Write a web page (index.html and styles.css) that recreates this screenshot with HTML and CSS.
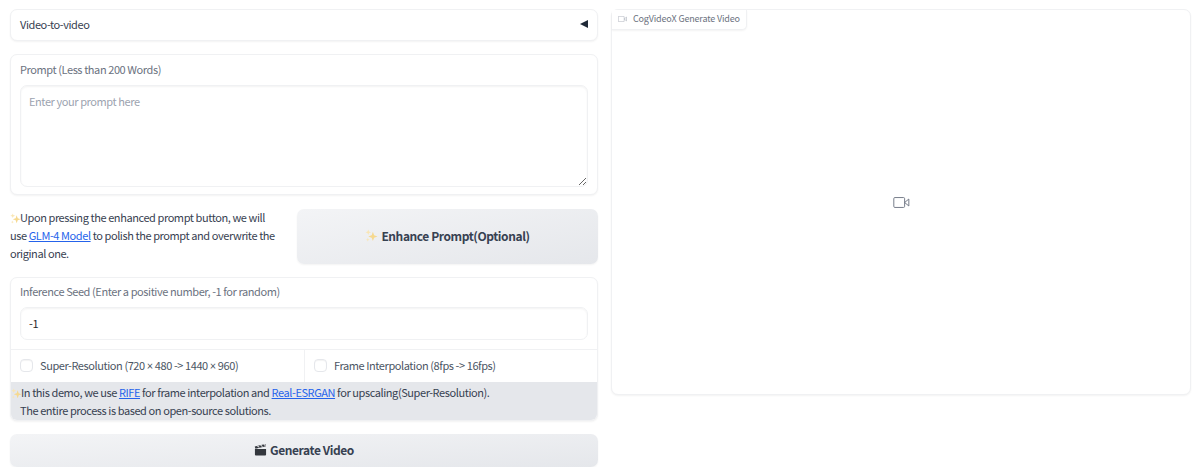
FILE: index.html
```html
<!DOCTYPE html>
<html lang="en">
<head>
    <meta charset="UTF-8">
    <title>CogVideoX</title>
    <link rel="stylesheet" href="styles.css">
</head>
<body>
    <svg class="defs" width="0" height="0">
        <symbol id="sparkle" viewBox="0 0 14 14">
            <path fill="#f6d98f" d="M8.5 3 9.800 6.700 13.500 8 9.800 9.300 8.500 13 7.200 9.300 3.500 8 7.200 6.700Z"/>
            <path fill="#f9e6b4" d="M3.500 .5 4.300 2.700 6.500 3.500 4.300 4.300 3.500 6.500 2.700 4.300 .5 3.500 2.700 2.700Z"/>
            <path fill="#f9e6b4" d="M3 9.500 3.500 11 5 11.500 3.500 12 3 13.500 2.500 12 1 11.500 2.500 11Z"/>
        </symbol>
        <symbol id="video" viewBox="0 0 18 12">
            <rect x=".6" y=".6" width="11.800" height="10.800" rx="1.200" fill="none" stroke="currentColor"/>
            <path d="M12.400 6 17 2.200V9.800Z" fill="none" stroke="currentColor" stroke-linejoin="round"/>
        </symbol>
    </svg>

    <div class="layout">
        <div class="left-col">
            <div class="block accordion">
                <span>Video-to-video</span>
                <span class="arrow"></span>
            </div>

            <div class="block prompt-block">
                <label class="field-label">Prompt (Less than 200 Words)</label>
                <textarea class="prompt-input" placeholder="Enter your prompt here"></textarea>
            </div>

            <div class="enhance-row">
                <p class="enhance-text"><svg class="spark"><use href="#sparkle"/></svg>Upon pressing the enhanced prompt button, we will use <a href="#">GLM-4 Model</a> to polish the prompt and overwrite the original one.</p>
                <button class="btn enhance-btn"><svg class="spark-btn"><use href="#sparkle"/></svg>Enhance Prompt(Optional)</button>
            </div>

            <div class="block options">
                <div class="seed">
                    <label class="field-label">Inference Seed (Enter a positive number, -1 for random)</label>
                    <input class="seed-input" type="text" value="-1">
                </div>
                <div class="checks">
                    <label class="check"><span class="box"></span><span>Super-Resolution (720 <span class="times">×</span> 480 -&gt; 1440 <span class="times">×</span> 960)</span></label>
                    <label class="check"><span class="box"></span>Frame Interpolation (8fps -&gt; 16fps)</label>
                </div>
                <div class="note">
                    <p><svg class="spark"><use href="#sparkle"/></svg>In this demo, we use <a href="#">RIFE</a> for frame interpolation and <a href="#">Real-ESRGAN</a> for upscaling(Super-Resolution).</p>
                    <p class="note-indent">The entire process is based on open-source solutions.</p>
                </div>
            </div>

            <button class="btn generate-btn">
                <svg class="clapper" viewBox="0 0 14 14">
                    <path fill="#33373d" d="M1 6.500H13V12.500a1 1 0 0 1-1 1H2a1 1 0 0 1-1-1Z"/>
                    <path fill="#33373d" d="M.8 3.900 12.200 1l.7 2.400L1.500 6.300Z"/>
                    <path fill="#e8e9ec" d="M3 3.300 5 4.900 6.300 4.600 4.300 3ZM6.500 2.400 8.500 4 9.800 3.700 7.800 2.100ZM10 1.500 12 3.100 12.700 3 11.300 1.200Z"/>
                </svg>Generate Video
            </button>
        </div>

        <div class="block video-panel">
            <div class="video-tab"><svg class="tab-icon"><use href="#video"/></svg>CogVideoX Generate Video</div>
            <svg class="video-empty"><use href="#video"/></svg>
        </div>
    </div>
</body>
</html>
```

FILE: styles.css
```css
* {
    box-sizing: border-box;
}
body {
    margin: 0;
    padding: 9px 9px 0 10px;
    font-family: "Noto Sans CJK SC", "Noto Sans", sans-serif;
    font-size: 11px;
    letter-spacing: -0.42px;
    line-height: 18px;
    color: #27272a;
    background: #fff;
}
.defs {
    position: absolute;
}
.layout {
    display: grid;
    grid-template-columns: 588px 580px;
    gap: 13px;
    align-items: start;
}
.left-col {
    display: flex;
    flex-direction: column;
    gap: 13px;
}
.block {
    background: #fff;
    border: 1px solid #f0f1f3;
    border-radius: 7px;
    box-shadow: 0 1px 2px rgba(0, 0, 0, 0.05);
}
.accordion {
    height: 32px;
    padding: 0 9px 2px;
    display: flex;
    align-items: center;
    justify-content: space-between;
    color: #374151;
}
.arrow {
    width: 0;
    height: 0;
    border-top: 4px solid transparent;
    border-bottom: 4px solid transparent;
    border-right: 8px solid #1f2937;
}
.prompt-block {
    height: 141px;
    padding: 5px 9px 0;
}
.field-label {
    display: block;
    color: #6b7280;
    margin-bottom: 7px;
}
.prompt-input, .seed-input {
    display: block;
    width: 100%;
    font: inherit;
    letter-spacing: inherit;
    border: 1px solid #f0f1f3;
    border-radius: 7px;
    box-shadow: inset 0 1px 2px rgba(0, 0, 0, 0.05);
    padding: 6px 8px;
    color: #27272a;
    outline: none;
}
.prompt-input {
    height: 102px;
}
.prompt-input::placeholder {
    color: #9ca3af;
}
.enhance-row {
    display: grid;
    grid-template-columns: 287px 301px;
    height: 55px;
    margin-top: 1px;
}
.enhance-text {
    margin: -1px 0 0;
    width: 270px;
    color: #374151;
}
a {
    color: #2563eb;
}
.spark {
    width: 11px;
    height: 11px;
    margin-right: -1px;
    vertical-align: -2px;
}
.btn {
    border: 0;
    border-radius: 7px;
    padding: 0 0 2px;
    font-family: inherit;
    font-weight: 600;
    letter-spacing: -0.42px;
    color: #374151;
    background: linear-gradient(to bottom right, #f3f4f6, #e5e7eb);
    box-shadow: 0 1px 2px rgba(0, 0, 0, 0.05);
    display: flex;
    align-items: center;
    justify-content: center;
}
.enhance-btn {
    font-size: 12px;
    height: 55px;
}
.spark-btn {
    width: 13px;
    height: 13px;
    margin-right: 3px;
}
.seed {
    height: 71px;
    padding: 4px 9px 0;
}
.seed-input {
    height: 33px;
    padding-bottom: 8px;
}
.options {
    overflow: hidden;
}
.checks {
    display: grid;
    grid-template-columns: 293px 1fr;
    height: 33px;
    padding-bottom: 0;
    border-top: 1px solid #f0f1f3;
}
.check {
    display: flex;
    align-items: center;
    padding: 0 0 2px 9px;
    color: #4b5563;
}
.check + .check {
    border-left: 1px solid #f0f1f3;
    padding-left: 9px;
}
.times {
    font-family: Lato, sans-serif;
}
.box {
    width: 13px;
    height: 13px;
    margin-right: 7px;
    border: 1px solid #e5e7eb;
    border-radius: 4px;
    box-shadow: inset 0 1px 1px rgba(0, 0, 0, 0.05);
}
.note {
    background: #e5e7eb;
    height: 38px;
    color: #374151;
    padding-top: 1px;
}
.note p {
    margin: 0;
}
.note-indent {
    padding-left: 9px;
}
.generate-btn {
    height: 33px;
    font-size: 12px;
}
.clapper {
    width: 13px;
    height: 13px;
    margin-right: 3px;
}
.video-panel {
    position: relative;
    height: 386px;
    display: flex;
    align-items: center;
    justify-content: center;
}
.video-tab {
    position: absolute;
    top: 0;
    left: 0;
    height: 20px;
    padding: 0 6px 2px;
    font-size: 9px;
    letter-spacing: -0.17px;
    color: #6b7280;
    display: flex;
    align-items: center;
    background: #fff;
    border-right: 1px solid #f0f1f3;
    border-bottom: 1px solid #f0f1f3;
    border-radius: 0 0 5px 0;
    box-shadow: 0 1px 2px rgba(0, 0, 0, 0.05);
}
.tab-icon {
    width: 9px;
    height: 6px;
    color: #9ca3af;
    margin-right: 6px;
}
.video-empty {
    width: 17px;
    height: 11px;
    color: #6b7280;
}
```
